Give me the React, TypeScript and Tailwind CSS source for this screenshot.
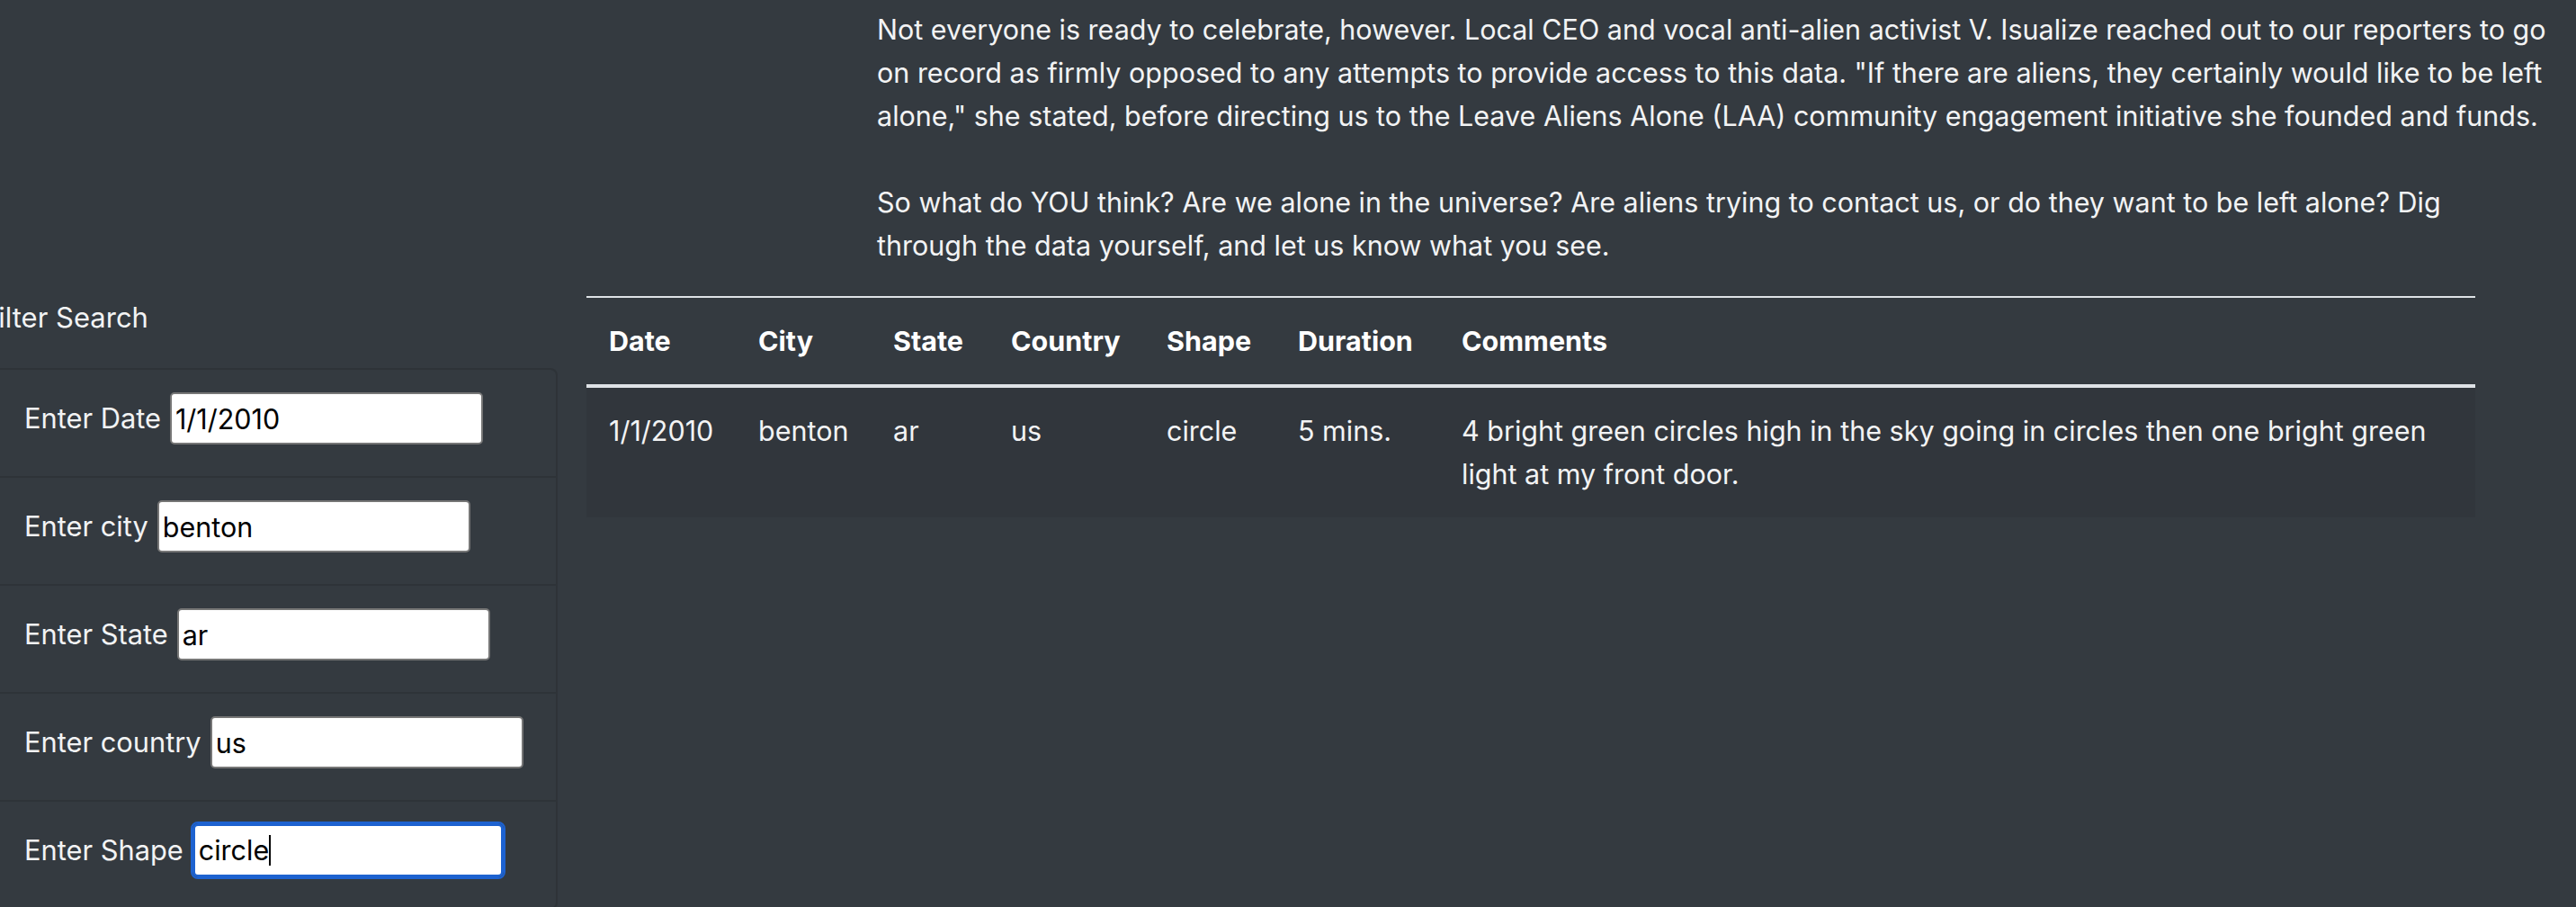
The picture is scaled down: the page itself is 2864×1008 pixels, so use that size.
import React from "react";

const rows = [
  { label: "Enter Date", value: "1/1/2010" },
  { label: "Enter city", value: "benton" },
  { label: "Enter State", value: "ar" },
  { label: "Enter country", value: "us" },
];

export default function App() {
  return (
    <div className="w-[2864px] h-[1008px] overflow-hidden bg-[#343a40] text-[#f2f3f4] font-['Inter','Noto_Sans',sans-serif]">
      <div className="ml-[975px] pt-[9px] text-[30.5px] leading-[48px] whitespace-nowrap">
        <p>
          <span className="block">Not everyone is ready to celebrate, however. Local CEO and vocal anti-alien activist V. Isualize reached out to our reporters to go</span>
          <span className="block">on record as firmly opposed to any attempts to provide access to this data. "If there are aliens, they certainly would like to be left</span>
          <span className="block">alone," she stated, before directing us to the Leave Aliens Alone (LAA) community engagement initiative she founded and funds.</span>
        </p>
        <p className="mt-[48px]">
          <span className="block">So what do YOU think? Are we alone in the universe? Are aliens trying to contact us, or do they want to be left alone? Dig</span>
          <span className="block">through the data yourself, and let us know what you see.</span>
        </p>
      </div>

      <div className="mt-[32px] flex items-start">
        <div className="-ml-[20px] w-[640px] shrink-0">
          <h5 className="text-[31px] leading-[48px]">Filter Search</h5>
          <ul className="mt-[32px] border-2 border-[#2e3338] rounded-[8px]">
            {rows.map((r, i) => (
              <li
                key={r.label}
                className={
                  i === 0
                    ? "h-[118px] flex items-center pl-[45px] pb-[10px] text-[30.8px] leading-[48px]"
                    : "h-[120px] border-t-2 border-[#2e3338] flex items-center pl-[45px] pb-[10px] text-[30.8px] leading-[48px]"
                }
              >
                <label>{r.label}</label>
                <input
                  readOnly
                  value={r.value}
                  className="ml-[10px] w-[348px] h-[58px] border-2 border-[#767676] rounded-[5px] bg-white text-black text-[30.5px] px-[4px] outline-none font-['Inter','Noto_Sans',sans-serif]"
                />
              </li>
            ))}
            <li className="h-[120px] border-t-2 border-[#2e3338] flex items-center pl-[45px] pb-[10px] text-[30.8px] leading-[48px]">
              <label>Enter Shape</label>
              <div className="ml-[10px] w-[346px] h-[60px] border-[3px] border-[#1d62d0] outline-2 outline-[#1d62d0] rounded-[6px] bg-white text-black text-[30.5px] pl-[4px] flex items-center">
                <span>circle</span>
                <span className="w-[2px] h-[34px] bg-black"></span>
              </div>
            </li>
          </ul>
        </div>

        <table className="ml-[32px] w-[2100px] table-fixed border-collapse text-[30.5px] leading-[48px]">
          <colgroup>
            <col className="w-[166px]" />
            <col className="w-[150px]" />
            <col className="w-[131px]" />
            <col className="w-[173px]" />
            <col className="w-[146px]" />
            <col className="w-[182px]" />
            <col />
          </colgroup>
          <thead>
            <tr>
              {["Date", "City", "State", "Country", "Shape", "Duration", "Comments"].map((h) => (
                <th
                  key={h}
                  className="border-t-2 border-b-4 border-[#dee2e6] px-[25px] py-[24px] text-left font-bold text-white"
                >
                  {h}
                </th>
              ))}
            </tr>
          </thead>
          <tbody>
            <tr className="bg-[#31363c]">
              {["1/1/2010", "benton", "ar", "us", "circle", "5 mins."].map((c, i) => (
                <td key={i} className="px-[25px] py-[24px] align-top">
                  {c}
                </td>
              ))}
              <td className="px-[25px] py-[24px] align-top">
                4 bright green circles high in the sky going in circles then one bright green light at my front door.
              </td>
            </tr>
          </tbody>
        </table>
      </div>
    </div>
  );
}
